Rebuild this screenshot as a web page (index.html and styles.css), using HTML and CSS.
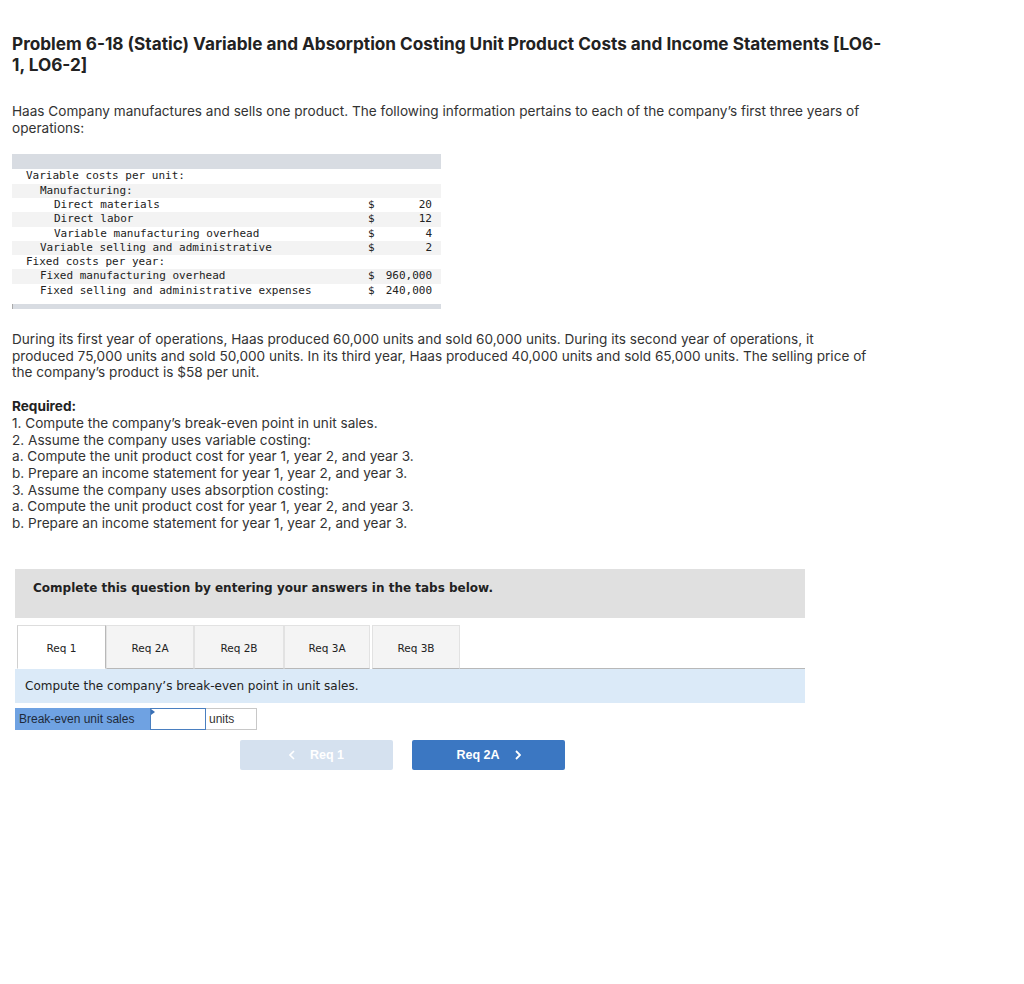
FILE: index.html
```html
<!DOCTYPE html>
<html>
<head>
<meta charset="utf-8">
<link rel="stylesheet" href="styles.css">
</head>
<body>
<div class="page">
  <h1 class="title">Problem 6-18 (Static) Variable and Absorption Costing Unit Product Costs and Income Statements [LO6-<br>1, LO6-2]</h1>
  <p class="para intro">Haas Company manufactures and sells one product. The following information pertains to each of the company’s first three years of<br>operations:</p>

  <div class="datatable">
    <div class="bar-top"></div>
    <table class="costs">
      <tr><td class="l0">Variable costs per unit:</td><td class="cur"></td><td class="val"></td></tr>
      <tr class="alt"><td class="l1">Manufacturing:</td><td class="cur"></td><td class="val"></td></tr>
      <tr><td class="l2">Direct materials</td><td class="cur">$</td><td class="val">20</td></tr>
      <tr class="alt"><td class="l2">Direct labor</td><td class="cur">$</td><td class="val">12</td></tr>
      <tr><td class="l2">Variable manufacturing overhead</td><td class="cur">$</td><td class="val">4</td></tr>
      <tr class="alt"><td class="l1">Variable selling and administrative</td><td class="cur">$</td><td class="val">2</td></tr>
      <tr><td class="l0">Fixed costs per year:</td><td class="cur"></td><td class="val"></td></tr>
      <tr class="alt"><td class="l1">Fixed manufacturing overhead</td><td class="cur">$</td><td class="val">960,000</td></tr>
      <tr><td class="l1">Fixed selling and administrative expenses</td><td class="cur">$</td><td class="val">240,000</td></tr>
    </table>
    <div class="bar-bottom"></div>
  </div>

  <p class="para during">During its first year of operations, Haas produced 60,000 units and sold 60,000 units. During its second year of operations, it<br>produced 75,000 units and sold 50,000 units. In its third year, Haas produced 40,000 units and sold 65,000 units. The selling price of<br>the company’s product is $58 per unit.</p>

  <div class="para required">
    <div class="req-head">Required:</div>
    <div>1. Compute the company’s break-even point in unit sales.</div>
    <div>2. Assume the company uses variable costing:</div>
    <div>a. Compute the unit product cost for year 1, year 2, and year 3.</div>
    <div>b. Prepare an income statement for year 1, year 2, and year 3.</div>
    <div>3. Assume the company uses absorption costing:</div>
    <div>a. Compute the unit product cost for year 1, year 2, and year 3.</div>
    <div>b. Prepare an income statement for year 1, year 2, and year 3.</div>
  </div>

  <div class="question">
    <div class="banner">Complete this question by entering your answers in the tabs below.</div>
    <div class="tabs">
      <div class="tab active t1">Req 1</div>
      <div class="tab t2">Req 2A</div>
      <div class="tab t3">Req 2B</div>
      <div class="tab t4">Req 3A</div>
      <div class="tab t5">Req 3B</div>
      <div class="tab-rest"></div>
    </div>
    <div class="instr">Compute the company’s break-even point in unit sales.</div>
    <div class="answer-row">
      <div class="ans-label">Break-even unit sales</div>
      <div class="ans-input"><span class="marker"></span></div>
      <div class="ans-unit">units</div>
    </div>
    <div class="nav">
      <div class="btn btn-prev"><svg class="chev" width="6" height="10" viewBox="0 0 6 10"><polyline points="5,1 1,5 5,9" fill="none" stroke="#ffffff" stroke-width="1.6"/></svg>Req 1</div>
      <div class="btn btn-next">Req 2A<svg class="chev chev-r" width="6" height="10" viewBox="0 0 6 10"><polyline points="1,1 5,5 1,9" fill="none" stroke="#ffffff" stroke-width="1.8"/></svg></div>
    </div>
  </div>
</div>
</body>
</html>
```

FILE: styles.css
```css
html, body {
  margin: 0;
  padding: 0;
  background: #ffffff;
}
.page {
  padding: 33px 0 0 12px;
  font-family: "Inter", "Lato", sans-serif;
  color: #333333;
}
.title {
  margin: 0;
  font-size: 17.2px;
  line-height: 21px;
  font-weight: 700;
  color: #222222;
  white-space: nowrap;
}
.para {
  font-size: 13.6px;
  line-height: 16.7px;
  margin: 0;
  white-space: nowrap;
}
.intro {
  margin-top: 28px;
}
.datatable {
  width: 429px;
  margin-top: 18px;
}
.bar-top {
  height: 15px;
  background: #d8dce2;
}
.bar-bottom {
  height: 5px;
  margin-top: 6px;
  background: #d8dce2;
  border-left: 1px solid #aaaaaa;
}
.costs {
  width: 100%;
  border-collapse: collapse;
  font-family: "DejaVu Sans Mono", "Liberation Mono", monospace;
  font-size: 11px;
  color: #222222;
}
.costs td {
  padding: 0;
  height: 14.3px;
  line-height: 14.3px;
  white-space: nowrap;
}
.costs tr.alt td {
  background: #f3f3f3;
}
.costs .l0 { padding-left: 14px; }
.costs .l1 { padding-left: 28px; }
.costs .l2 { padding-left: 42px; }
.costs .cur {
  width: 14px;
  text-align: left;
}
.costs .val {
  width: 50px;
  text-align: right;
  padding-right: 9px;
}
.during {
  margin-top: 22px;
}
.required {
  margin-top: 17px;
}
.req-head {
  font-weight: 700;
  color: #222222;
}
.question {
  margin: 37px 0 0 3px;
  width: 790px;
  font-family: "DejaVu Sans", Verdana, sans-serif;
}
.banner {
  height: 49px;
  background: #e0e0e0;
  font-weight: 700;
  font-size: 12px;
  line-height: 15px;
  color: #222222;
  padding: 12px 0 0 18px;
  box-sizing: border-box;
}
.tabs {
  display: flex;
  margin-top: 7px;
  height: 44px;
  align-items: stretch;
}
.tab {
  box-sizing: border-box;
  background: #f4f4f4;
  border: 1px solid #e2e2e2;
  border-bottom: 1px solid #b8b8b8;
  font-size: 10.5px;
  color: #222222;
  display: flex;
  align-items: center;
  justify-content: center;
  padding-top: 2px;
}
.tab.active {
  background: #ffffff;
  border-color: #dddddd;
  border-bottom-color: #ffffff;
  border-left-color: #d0d0d0;
  border-right-color: #b8b8b8;
}
.t1 { width: 89px; margin-left: 2px; }
.t2 { width: 88px; }
.t3 { width: 90px; }
.t4 { width: 86px; }
.t5 { width: 88px; margin-left: 2px; }
.tab-rest {
  flex: 1;
  border-bottom: 1px solid #b8b8b8;
}
.instr {
  height: 34px;
  background: #dbeaf8;
  font-size: 12px;
  color: #222222;
  padding-left: 10px;
  display: flex;
  align-items: center;
  box-sizing: border-box;
}
.answer-row {
  display: flex;
  margin-top: 5px;
  height: 22px;
  font-family: "Liberation Sans", Arial, sans-serif;
  font-size: 12px;
}
.ans-label {
  width: 135px;
  background: #6fa2e2;
  color: #1e2a3a;
  padding-left: 4px;
  box-sizing: border-box;
  display: flex;
  align-items: center;
}
.ans-input {
  position: relative;
  width: 56px;
  box-sizing: border-box;
  background: #ffffff;
  border: 1px solid #4a7fc0;
}
.marker {
  position: absolute;
  left: 0;
  top: 0;
  width: 0;
  height: 0;
  border-top: 3px solid transparent;
  border-bottom: 3px solid transparent;
  border-left: 4px solid #3a6fb5;
}
.ans-unit {
  width: 51px;
  box-sizing: border-box;
  border: 1px solid #c8c8c8;
  border-left: none;
  padding-left: 3px;
  display: flex;
  align-items: center;
  color: #333333;
}
.nav {
  display: flex;
  gap: 19px;
  margin: 10px 0 0 225px;
}
.btn {
  width: 153px;
  height: 30px;
  border-radius: 2px;
  color: #ffffff;
  font-family: "Liberation Sans", Arial, sans-serif;
  font-weight: 700;
  font-size: 12.5px;
  display: flex;
  align-items: center;
  justify-content: center;
}
.btn-prev {
  background: #d5e1ef;
}
.btn-next {
  background: #3b77c2;
}
.chev {
  display: block;
  margin-right: 15px;
}
.chev-r {
  margin-right: 0;
  margin-left: 15px;
}
```
